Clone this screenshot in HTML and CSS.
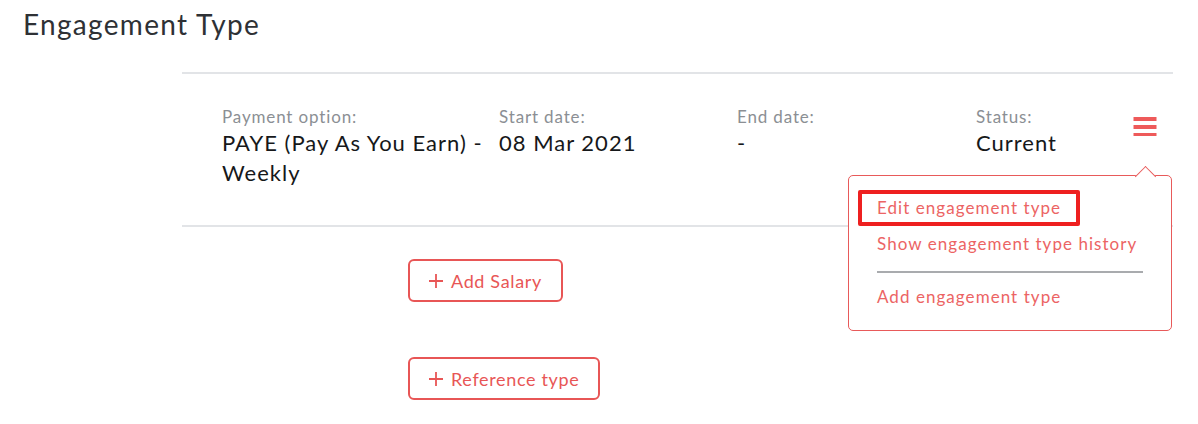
FILE: index.html
```html
<!DOCTYPE html>
<html lang="en">
<head>
<meta charset="utf-8">
<title>Engagement Type</title>
<link rel="stylesheet" href="styles.css">
</head>
<body>
<h1 class="title">Engagement Type</h1>
<div class="section">
  <div class="record">
    <div class="field f-payment">
      <div class="label">Payment option:</div>
      <div class="value">PAYE (Pay As You Earn) - Weekly</div>
    </div>
    <div class="field f-start">
      <div class="label">Start date:</div>
      <div class="value">08 Mar 2021</div>
    </div>
    <div class="field f-end">
      <div class="label">End date:</div>
      <div class="value">-</div>
    </div>
    <div class="field f-status">
      <div class="label">Status:</div>
      <div class="value">Current</div>
    </div>
    <div class="menu-wrap">
      <button class="menu-btn" aria-label="Menu">
        <svg width="24" height="20" viewBox="0 0 24 20"><rect x="0.5" y="1" width="23" height="4" fill="#ee5a5a"/><rect x="0.5" y="9" width="23" height="4" fill="#ee5a5a"/><rect x="0.5" y="17" width="23" height="4" fill="#ee5a5a"/></svg>
      </button>
      <div class="popup">
        <a class="item item-highlight">Edit engagement type</a>
        <a class="item">Show engagement type history</a>
        <div class="divider"></div>
        <a class="item">Add engagement type</a>
      </div>
    </div>
  </div>
  <div class="actions">
    <button class="btn"><svg class="plus" width="16" height="16" viewBox="0 0 16 16"><path d="M8 1V15M1 8H15" stroke="#e85656" stroke-width="1.8" fill="none"/></svg>Add Salary</button>
    <button class="btn"><svg class="plus" width="16" height="16" viewBox="0 0 16 16"><path d="M8 1V15M1 8H15" stroke="#e85656" stroke-width="1.8" fill="none"/></svg>Reference type</button>
  </div>
</div>
</body>
</html>
```
FILE: styles.css
```css
html, body {
  margin: 0;
  padding: 0;
  background: #ffffff;
}
body {
  font-family: Lato, "Open Sans", "Liberation Sans", sans-serif;
  color: #1b1d20;
  width: 1198px;
  height: 424px;
  overflow: hidden;
}
.title {
  margin: 0;
  padding: 6px 0 0 23px;
  font-size: 28px;
  font-weight: 400;
  line-height: 36px;
  letter-spacing: 1.3px;
  color: #2e3135;
  height: 66px;
}
.section {
  margin-left: 182px;
  width: 991px;
}
.record {
  display: flex;
  border-top: 2px solid #e2e4e7;
  border-bottom: 2px solid #e2e4e7;
  padding: 32px 0 36px 40px;
  height: 83px;
}
.field { flex: none; }
.f-payment { width: 277px; }
.f-start { width: 238px; }
.f-end { width: 239px; }
.f-status { width: 150px; }
.label {
  font-size: 17px;
  line-height: 22px;
  letter-spacing: 0.85px;
  color: #8b8f94;
}
.value {
  font-size: 22px;
  line-height: 30px;
  letter-spacing: 1px;
  color: #16181a;
}
.f-payment .value { width: 272px; }
.menu-wrap {
  position: relative;
  margin-left: 7px;
}
.menu-btn {
  border: 0;
  background: none;
  padding: 0;
  margin-top: 10px;
  width: 24px;
  height: 22px;
  display: block;
}
.popup {
  position: absolute;
  top: 69px;
  right: -15px;
  width: 324px;
  height: 156px;
  border: 1.5px solid #e85a5a;
  border-radius: 5px;
  background: #fff;
  box-sizing: border-box;
  padding: 14px 0 0 28px;
  z-index: 2;
}
.popup::before {
  content: "";
  position: absolute;
  top: -7px;
  right: 18px;
  width: 14px;
  height: 14px;
  background: #fff;
  border-left: 1.5px solid #e85a5a;
  border-top: 1.5px solid #e85a5a;
  transform: rotate(45deg);
}
.item {
  display: block;
  position: relative;
  font-size: 17px;
  line-height: 36px;
  letter-spacing: 1.05px;
  color: #ec6464;
  white-space: nowrap;
}
.item-highlight::after {
  content: "";
  position: absolute;
  left: -19px;
  top: 0;
  width: 222px;
  height: 36px;
  border: 4px solid #ee2020;
  border-radius: 2px;
  box-sizing: border-box;
}
.divider {
  height: 2px;
  background: #a9abae;
  width: 266px;
  margin: 9px 0 6px;
}
.actions {
  padding-left: 226px;
  padding-top: 32px;
  display: flex;
  flex-direction: column;
  align-items: flex-start;
  gap: 55px;
}
.btn {
  font-family: inherit;
  height: 43px;
  border: 2px solid #e85656;
  border-radius: 6px;
  background: #fff;
  color: #e85656;
  font-size: 18px;
  letter-spacing: 0.65px;
  padding: 0 19px 0 18px;
  display: flex;
  align-items: center;
}
.plus {
  margin-right: 7px;
  flex: none;
}
```
